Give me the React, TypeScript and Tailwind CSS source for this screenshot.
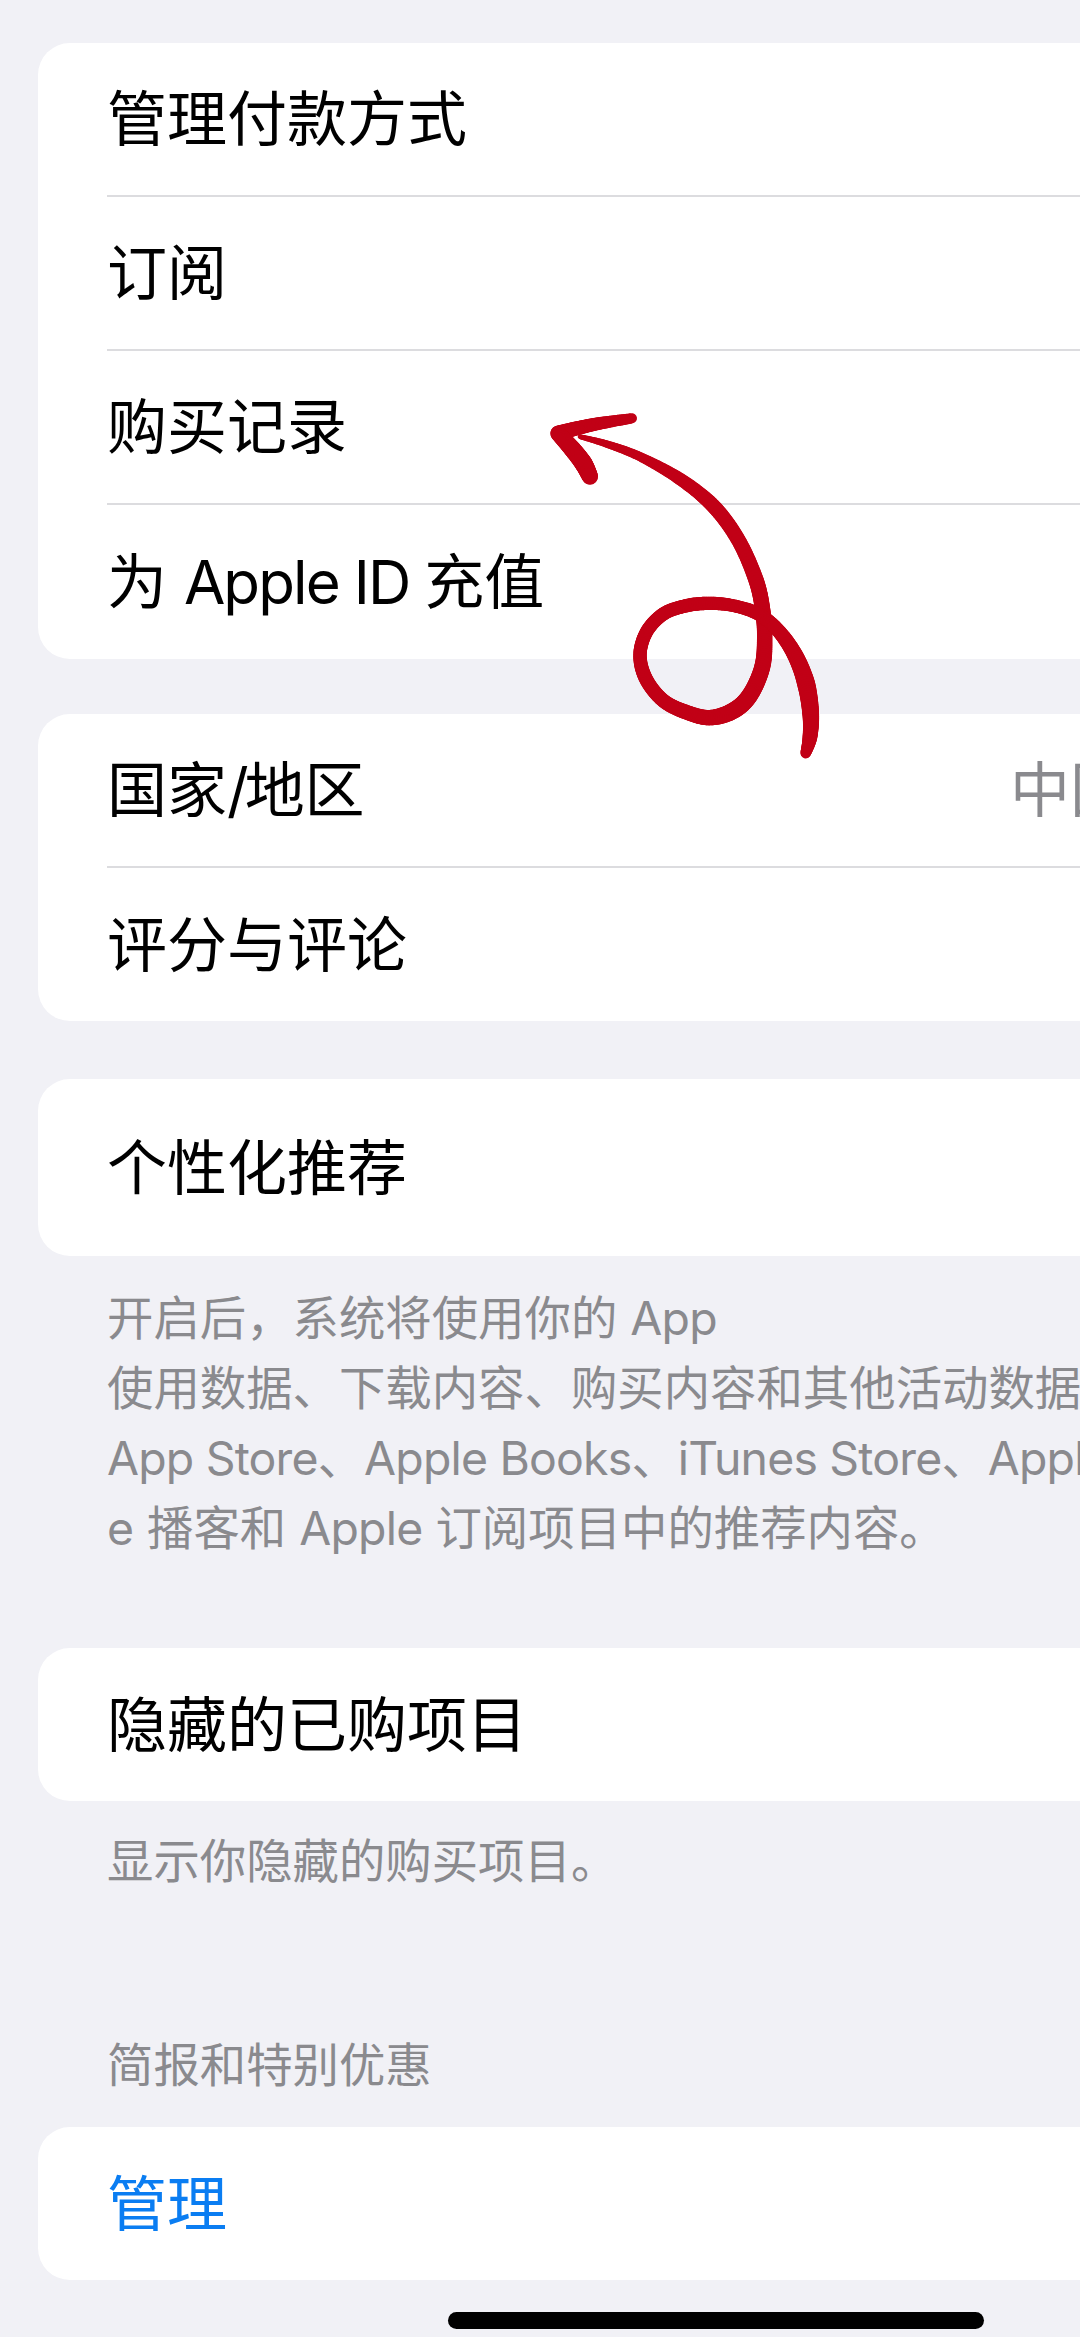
import type { ReactNode } from "react";

const font = { fontFamily: '"Inter","Noto Sans CJK SC",sans-serif' };

type P = [number, number, number];

const shaft: P[] = [
  [240, 170, 14], [320, 192, 22], [420, 230, 28], [540, 297, 38], [640, 378, 44], [715, 480, 44],
  [768, 600, 46], [788, 690, 46], [794, 770, 46], [787, 860, 48], [750, 945, 50], [700, 992, 50],
  [630, 1013, 46], [560, 997, 44], [490, 962, 42], [438, 897, 42], [420, 825, 40], [440, 755, 40],
  [490, 702, 40], [555, 678, 40], [625, 670, 40], [700, 677, 38], [775, 702, 40], [835, 752, 42],
  [885, 825, 48], [918, 910, 54], [932, 1000, 50], [930, 1070, 44], [917, 1120, 30],
];
const head1: P[] = [[396, 115, 30], [300, 130, 38], [230, 145, 42], [174, 160, 46]];
const head2: P[] = [[174, 160, 46], [215, 205, 52], [250, 250, 54], [270, 290, 48]];

function sample(pts: P[]): P[] {
  const out: P[] = [];
  for (let i = 0; i < pts.length - 1; i++) {
    const p0 = pts[Math.max(i - 1, 0)];
    const p1 = pts[i];
    const p2 = pts[i + 1];
    const p3 = pts[Math.min(i + 2, pts.length - 1)];
    for (let k = 0; k < 14; k++) {
      const t = k / 14;
      const c = (j: number) =>
        0.5 *
        (2 * p1[j] +
          (p2[j] - p0[j]) * t +
          (2 * p0[j] - 5 * p1[j] + 4 * p2[j] - p3[j]) * t * t +
          (3 * p1[j] - p0[j] - 3 * p2[j] + p3[j]) * t * t * t);
      out.push([c(0), c(1), p1[2] + (p2[2] - p1[2]) * t]);
    }
  }
  out.push(pts[pts.length - 1]);
  return out;
}

function Stroke({ pts }: { pts: P[] }) {
  const s = sample(pts);
  return (
    <>
      {s.slice(0, -1).map((a, i) => (
        <line key={i} x1={a[0]} y1={a[1]} x2={s[i + 1][0]} y2={s[i + 1][1]} strokeWidth={a[2]} />
      ))}
    </>
  );
}

function Row({ text, last, right, blue }: { text: ReactNode; last?: boolean; right?: string; blue?: boolean }) {
  return (
    <div className={`h-full flex items-center justify-between ${last ? "" : "border-b-2 border-[#dcdcdf]"}`}>
      <span className={`text-[60px] leading-none whitespace-pre ${blue ? "text-[#0a7df2]" : "text-black"}`}>{text}</span>
      {right ? <span className="text-[60px] leading-none text-[#8a8a8e] whitespace-nowrap ml-auto -mr-[50px]">{right}</span> : null}
    </div>
  );
}

function L({ children }: { children: ReactNode }) {
  return <span className="tracking-[-0.8px]">{children}</span>;
}

export default function App() {
  return (
    <div className="relative w-[1080px] h-[2337px] overflow-hidden bg-[#f1f1f6] pl-[38px] pt-[43px] flex flex-col" style={font}>
      <div className="bg-white rounded-l-[32px] pl-[69px] flex flex-col">
        <div className="h-[154px]"><Row text="管理付款方式" /></div>
        <div className="h-[154px]"><Row text="订阅" /></div>
        <div className="h-[154px]"><Row text="购买记录" /></div>
        <div className="h-[154px]">
          <Row text={<>为 <span className="tracking-[-1.9px]">Apple ID </span>充值</>} last />
        </div>
      </div>

      <div className="mt-[55px] bg-white rounded-l-[32px] pl-[69px] flex flex-col overflow-hidden">
        <div className="h-[154px]">
          <Row text={<>国家<span className="tracking-[-4px]">/</span>地区</>} right="中国" />
        </div>
        <div className="h-[153px]"><Row text="评分与评论" last /></div>
      </div>

      <div className="mt-[58px] h-[177px] bg-white rounded-l-[32px] pl-[69px]">
        <Row text="个性化推荐" last />
      </div>

      <div className="mt-[27px] pl-[69px] text-[46.4px] leading-[70px] text-[#8a8a8e] whitespace-pre flex flex-col">
        <span>{"开启后\uFF0C系统将使用你的 "}<L>App</L></span>
        <span>使用数据、下载内容、购买内容和其他活动数据</span>
        <span><L>App Store</L>、<L>Apple Books</L>、<L>iTunes Store</L>、<L>Appl</L></span>
        <span>e 播客和 <L>Apple</L> 订阅项目中的推荐内容。</span>
      </div>

      <div className="mt-[85px] h-[153px] bg-white rounded-l-[32px] pl-[69px]">
        <Row text="隐藏的已购项目" last />
      </div>

      <div className="mt-[25px] pl-[69px] text-[46.4px] leading-[70px] text-[#8a8a8e] whitespace-nowrap">显示你隐藏的购买项目。</div>

      <div className="mt-[134px] pl-[69px] text-[46.4px] leading-[70px] text-[#8a8a8e] whitespace-nowrap">简报和特别优惠</div>

      <div className="mt-[27px] h-[153px] bg-white rounded-l-[32px] pl-[69px]">
        <Row text="管理" last blue />
      </div>

      <svg
        className="absolute left-[500px] top-[380px] w-[400px] h-[400px]"
        viewBox="0 0 1200 1200"
        fill="none"
        stroke="#c10016"
        strokeLinecap="round"
      >
        <Stroke pts={shaft} />
        <Stroke pts={head1} />
        <Stroke pts={head2} />
      </svg>

      <div className="absolute left-[448px] top-[2312px] w-[536px] h-[17px] rounded-full bg-black" />
    </div>
  );
}
